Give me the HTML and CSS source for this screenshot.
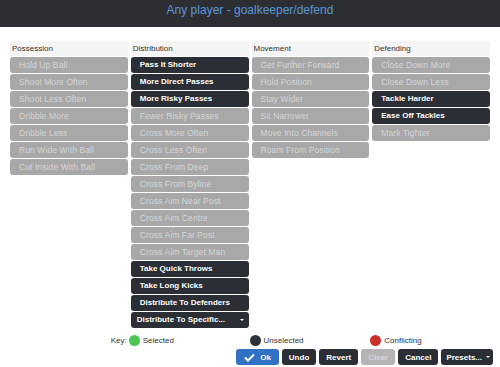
FILE: index.html
```html
<!DOCTYPE html>
<html lang="en">
<head>
    <meta charset="UTF-8">
    <title>Player Instructions</title>
    <link rel="stylesheet" href="styles.css">
</head>
<body>
    <div class="topbar">Any player - goalkeeper/defend</div>

    <div class="columns">
        <div class="column">
            <div class="col-head">Possession</div>
            <div class="opt">Hold Up Ball</div>
            <div class="opt">Shoot More Often</div>
            <div class="opt">Shoot Less Often</div>
            <div class="opt">Dribble More</div>
            <div class="opt">Dribble Less</div>
            <div class="opt">Run Wide With Ball</div>
            <div class="opt">Cut Inside With Ball</div>
        </div>
        <div class="column">
            <div class="col-head">Distribution</div>
            <div class="opt on">Pass It Shorter</div>
            <div class="opt on">More Direct Passes</div>
            <div class="opt on">More Risky Passes</div>
            <div class="opt">Fewer Risky Passes</div>
            <div class="opt">Cross More Often</div>
            <div class="opt">Cross Less Often</div>
            <div class="opt">Cross From Deep</div>
            <div class="opt">Cross From Byline</div>
            <div class="opt">Cross Aim Near Post</div>
            <div class="opt">Cross Aim Centre</div>
            <div class="opt">Cross Aim Far Post</div>
            <div class="opt">Cross Aim Target Man</div>
            <div class="opt on">Take Quick Throws</div>
            <div class="opt on">Take Long Kicks</div>
            <div class="opt on">Distribute To Defenders</div>
            <div class="opt on drop">Distribute To Specific... <span class="caret"></span></div>
        </div>
        <div class="column">
            <div class="col-head">Movement</div>
            <div class="opt">Get Further Forward</div>
            <div class="opt">Hold Position</div>
            <div class="opt">Stay Wider</div>
            <div class="opt">Sit Narrower</div>
            <div class="opt">Move Into Channels</div>
            <div class="opt">Roam From Position</div>
        </div>
        <div class="column">
            <div class="col-head">Defending</div>
            <div class="opt">Close Down More</div>
            <div class="opt">Close Down Less</div>
            <div class="opt on">Tackle Harder</div>
            <div class="opt on">Ease Off Tackles</div>
            <div class="opt">Mark Tighter</div>
        </div>
    </div>

    <div class="key">
        <div class="key-label">Key:</div>
        <div class="key-item"><span class="dot green"></span>Selected</div>
        <div class="key-item"><span class="dot dark"></span>Unselected</div>
        <div class="key-item"><span class="dot red"></span>Conflicting</div>
    </div>

    <div class="actions">
        <button class="btn blue">
            <svg width="11" height="9" viewBox="0 0 11 9"><polyline points="1,4.5 4,7.5 10,1.5" fill="none" stroke="#fff" stroke-width="2"/></svg>
            Ok
        </button>
        <button class="btn">Undo</button>
        <button class="btn">Revert</button>
        <button class="btn off">Clear</button>
        <button class="btn">Cancel</button>
        <button class="btn presets">Presets... <span class="caret"></span></button>
    </div>
</body>
</html>
```

FILE: styles.css
```css
body {
    margin: 0;
    background: #fff;
    font-family: "Liberation Sans", Arial, sans-serif;
    color: #333;
}
.topbar {
    height: 27px;
    line-height: 21px;
    background: #2c2e33;
    color: #5b98d8;
    font-size: 12px;
    text-align: center;
}
.columns {
    display: grid;
    grid-template-columns: repeat(4, 1fr);
    gap: 3px;
    margin-top: 14px;
    padding: 0 10px;
    align-items: start;
}
.column {
    display: flex;
    flex-direction: column;
    gap: 1px;
}
.col-head {
    height: 15px;
    line-height: 15px;
    background: #f4f4f4;
    font-size: 8px;
    padding-left: 2px;
}
.opt {
    height: 16px;
    line-height: 16px;
    padding-left: 9px;
    border-radius: 3px;
    background: #a8a8a8;
    color: #d6d6d6;
    font-size: 8.5px;
    letter-spacing: 0.1px;
    white-space: nowrap;
}
.opt.on {
    background: #2b2e34;
    color: #fff;
    font-weight: bold;
    font-size: 8px;
    letter-spacing: 0;
}
.drop {
    display: flex;
    justify-content: space-between;
    align-items: center;
    padding-left: 6px;
    padding-right: 5px;
}
.caret {
    display: inline-block;
    width: 0;
    height: 0;
    border-left: 2px solid transparent;
    border-right: 2px solid transparent;
    border-top: 2.5px solid #fff;
}
.key {
    display: grid;
    grid-template-columns: repeat(4, 1fr);
    gap: 3px;
    padding: 0 10px;
    margin-top: 6px;
    font-size: 8px;
    height: 12px;
    align-items: center;
}
.key-label {
    text-align: right;
    padding-right: 1px;
}
.key-item {
    display: flex;
    align-items: center;
    margin-left: -2px;
}
.dot {
    width: 11px;
    height: 11px;
    border-radius: 50%;
    margin-right: 3px;
}
.green { background: #4cc552; }
.dark { background: #2d3238; }
.red { background: #c9302c; }
.actions {
    display: flex;
    justify-content: flex-end;
    gap: 3px;
    margin-top: 3px;
    padding-right: 7px;
}
.btn {
    display: flex;
    align-items: center;
    gap: 5px;
    height: 16px;
    padding: 0 7px;
    border: none;
    border-radius: 3px;
    background: #2b2e34;
    color: #fff;
    font-family: "Liberation Sans", Arial, sans-serif;
    font-size: 8px;
    font-weight: bold;
}
.btn.blue {
    background: #3272c4;
    padding: 0 8px;
}
.btn.off {
    background: #b5b5b5;
    color: #d6d6d6;
}
.btn.presets {
    gap: 4px;
    padding: 0 3px 0 5px;
}
```
